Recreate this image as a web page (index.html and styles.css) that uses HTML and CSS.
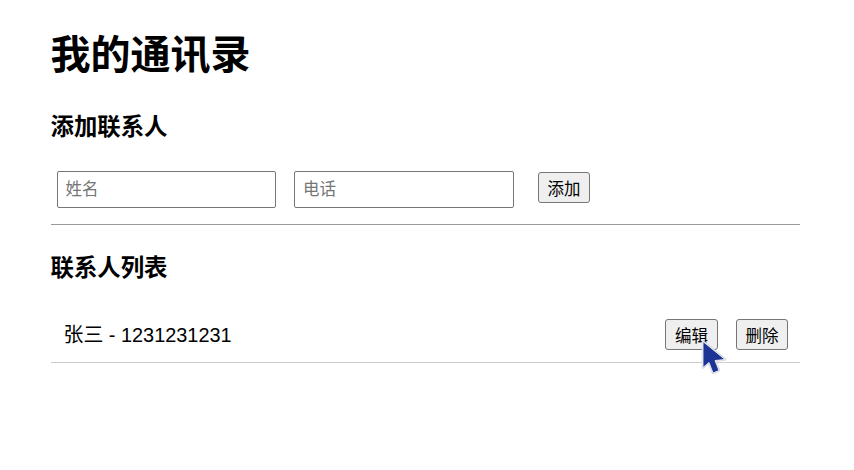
FILE: index.html
```html
<!DOCTYPE html>
<html lang="zh-CN">
<head>
    <meta charset="UTF-8">
    <meta name="viewport" content="width=device-width, initial-scale=1.0">
    <title>我的通讯录</title>
    <link rel="stylesheet" href="styles.css">
</head>
<body>
    <div class="container">
        <h1>我的通讯录</h1>

        <h2 class="add-title">添加联系人</h2>
        <form class="add-form">
            <input type="text" placeholder="姓名">
            <input type="text" placeholder="电话">
            <button type="button" class="btn add-btn">添加</button>
        </form>

        <hr>

        <h2 class="list-title">联系人列表</h2>
        <div class="contact">
            <span class="contact-text">张三 - 1231231231</span>
            <div class="contact-actions">
                <button type="button" class="btn">编辑</button>
                <button type="button" class="btn">删除</button>
                <svg class="cursor" width="28" height="38" viewBox="0 0 28 38">
                    <path d="M3 1.5 L3 27.5 L9 22.5 L13 33 L19 30.5 L15 20.5 L25 19.5 Z" fill="#1c3494" stroke="#d4d4dc" stroke-width="2.4" stroke-linejoin="round"/>
                    <path d="M3 1.5 L3 27.5 L9 22.5 L13 33 L19 30.5 L15 20.5 L25 19.5 Z" fill="#1c3494" stroke="#ffffff" stroke-width="0.8" stroke-linejoin="round"/>
                </svg>
            </div>
        </div>
    </div>
</body>
</html>
```

FILE: styles.css
```css
* { box-sizing: border-box; }
body { margin: 0; min-height: 470px; background-color: #fff; color: #000; font-family: "Liberation Sans", "Noto Sans CJK SC", sans-serif; }
.container { width: 749.6px; margin-left: 50.5px; padding-top: 32px; }
h1 { margin: 0; font-size: 40px; line-height: 46px; font-weight: bold; }
h2 { margin: 0; font-size: 23.4px; line-height: 27px; font-weight: bold; }
.add-title { margin-top: 36px; }
.add-form { display: flex; align-items: flex-start; margin-top: 30px; padding-left: 6.5px; }
.add-form input { width: 219.4px; height: 37px; margin-right: 18px; padding: 0 7.5px; border: 1px solid #767676; border-radius: 2px; font-family: inherit; font-size: 16.5px; }
.add-form input::placeholder { color: #757575; }
.btn { width: 52.4px; height: 31px; padding: 0; background-color: #efefef; border: 1px solid #767676; border-radius: 3px; color: #000; font-family: inherit; font-size: 16.5px; }
.add-btn { margin: 1px 0 0 6px; }
hr { height: 1px; margin: 16px 0 0; border: none; background-color: #9a9a9a; }
.list-title { margin-top: 30px; }
.contact { display: flex; justify-content: space-between; align-items: center; height: 61px; margin-top: 20px; padding: 5px 12px 0 13px; border-bottom: 1px solid #ccc; }
.contact-text { margin-top: -2px; font-size: 19.9px; }
.contact-actions { position: relative; display: flex; gap: 18px; }
.cursor { position: absolute; left: 35px; top: 21px; }
```
